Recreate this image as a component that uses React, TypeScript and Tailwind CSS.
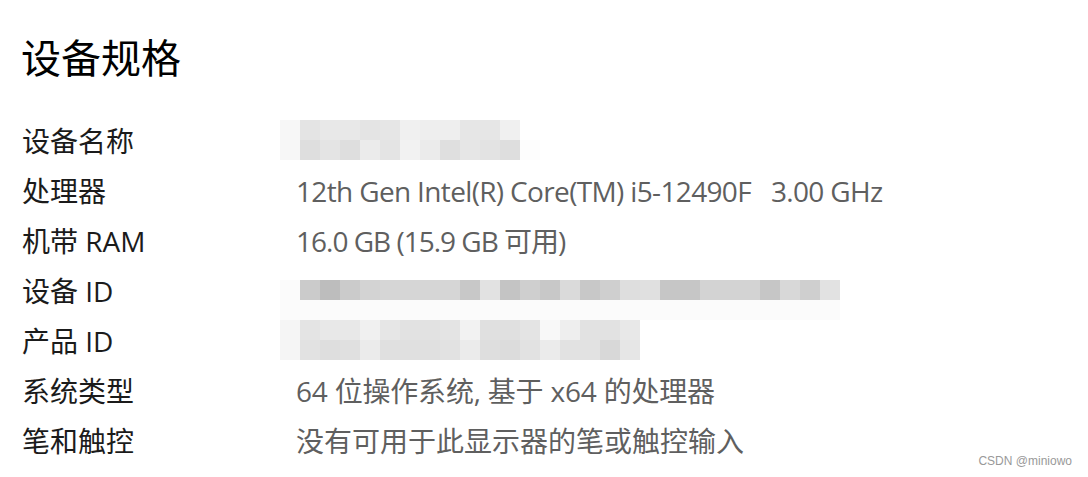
const font = 'font-["Open_Sans","Noto_Sans_CJK_SC",sans-serif]';

type Cell = string;

const NAME_BLOCK: Cell[][] = [
  ['#f7f7f7', '#e4e4e4', '#e8e8e8', '#e8e8e8', '#e4e4e4', '#e6e6e6', '#f0f0f0', '#eeeeee', '#eeeeee', '#e6e6e6', '#e6e6e6', '#f0f0f0', '#ffffff'],
  ['#f7f7f7', '#dedede', '#e4e4e4', '#dedede', '#ebebeb', '#e4e4e4', '#f2f2f2', '#ebebeb', '#dfdfdf', '#e6e6e6', '#e3e3e3', '#dedede', '#fdfdfd'],
];

const ID_BLOCK: Cell[][] = [
  ['#fbfbfb', '#cbcbcb', '#bdbdbd', '#cbcbcb', '#d3d3d3', '#d6d6d6', '#d6d6d6', '#d6d6d6', '#d6d6d6', '#c8c8c8', '#e2e2e2', '#c4c4c4', '#cfcfcf', '#c8c8c8', '#dadada', '#c8c8c8', '#cfcfcf', '#dedede', '#e0e0e0', '#c6c6c6', '#c6c6c6', '#d3d3d3', '#d3d3d3', '#d3d3d3', '#c6c6c6', '#d8d8d8', '#cfcfcf', '#e2e2e2'],
  Array(28).fill('#fbfbfb'),
];

const PRODUCT_BLOCK: Cell[][] = [
  ['#f5f5f5', '#e4e4e4', '#e8e8e8', '#e8e8e8', '#f0f0f0', '#e6e6e6', '#e2e2e2', '#e2e2e2', '#e4e4e4', '#f2f2f2', '#e0e0e0', '#e0e0e0', '#e4e4e4', '#f8f8f8', '#eeeeee', '#e2e2e2', '#e2e2e2', '#e8e8e8'],
  ['#f5f5f5', '#e2e2e2', '#dedede', '#e0e0e0', '#ebebeb', '#e0e0e0', '#e0e0e0', '#e0e0e0', '#e2e2e2', '#ebebeb', '#dedede', '#dcdcdc', '#e2e2e2', '#ebebeb', '#e2e2e2', '#e2e2e2', '#d8d8d8', '#e6e6e6'],
];

function Mosaic({ rows, className }: { rows: Cell[][]; className: string }) {
  return (
    <div className={`flex flex-col self-start ${className}`}>
      {rows.map((row, i) => (
        <div key={i} className="flex">
          {row.map((c, j) => (
            <div key={j} className="w-[20px] h-[20px]" style={{ backgroundColor: c }} />
          ))}
        </div>
      ))}
    </div>
  );
}

function Row({ label, children }: { label: string; children: React.ReactNode }) {
  return (
    <div className="flex h-[50px] items-center">
      <div className="w-[258px] shrink-0 text-[28px] text-[#1b1b1b]">{label}</div>
      {children}
    </div>
  );
}

function Value({ text, className = '' }: { text: string; className?: string }) {
  return <div className={`pl-4 text-[28px] text-[#5f5f5f] whitespace-pre ${className}`}>{text}</div>;
}

export default function App() {
  return (
    <div className={`relative w-[1088px] h-[477px] bg-white overflow-hidden pl-[22px] ${font}`}>
      <h1 className="mt-[33px] h-[50px] flex items-center text-[40px] -ml-[1px] text-black leading-none">设备规格</h1>
      <div className="mt-[33px] flex flex-col">
        <Row label="设备名称">
          <Mosaic rows={NAME_BLOCK} className="mt-[4px]" />
        </Row>
        <Row label="处理器">
          <Value text="12th Gen Intel(R) Core(TM) i5-12490F   3.00 GHz" className="tracking-[-0.65px]" />
        </Row>
        <Row label="机带 RAM">
          <Value text="16.0 GB (15.9 GB 可用)" className="tracking-[-1px]" />
        </Row>
        <Row label="设备 ID">
          <Mosaic rows={ID_BLOCK} className="mt-[14px]" />
        </Row>
        <Row label="产品 ID">
          <Mosaic rows={PRODUCT_BLOCK} className="mt-[4px]" />
        </Row>
        <Row label="系统类型">
          <Value text="64 位操作系统, 基于 x64 的处理器" className="tracking-[-0.2px]" />
        </Row>
        <Row label="笔和触控">
          <Value text="没有可用于此显示器的笔或触控输入" />
        </Row>
      </div>
      <div className="absolute right-[16px] bottom-[7px] text-[12px] text-[#999999] font-['Liberation_Sans',sans-serif]">
        CSDN @miniowo
      </div>
    </div>
  );
}
